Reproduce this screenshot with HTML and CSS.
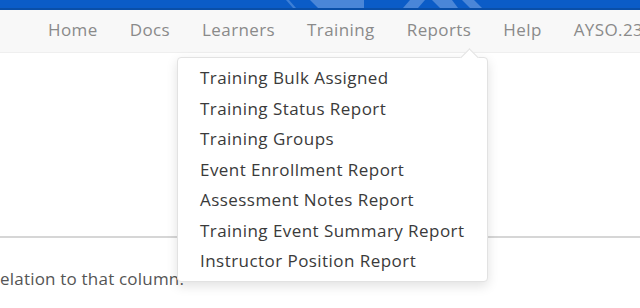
FILE: index.html
```html
<!DOCTYPE html>
<html>
<head>
<meta charset="utf-8">
<link rel="stylesheet" href="styles.css">
</head>
<body>
<div class="banner">
  <svg class="banner-art" width="640" height="8" viewBox="0 0 640 8">
    <polygon points="286,0 289,0 296,8 293,8" fill="#3d7fd6"/>
    <polygon points="310,0 364,0 364,8 318,8" fill="#4a86d8"/>
    <polygon points="410,0 425,0 418,8 403,8" fill="#4a86d8"/>
    <polygon points="432,0 452,0 458,8 440,8" fill="#4a86d8"/>
    <polygon points="462,0 474,0 482,8 470,8" fill="#4a86d8"/>
  </svg>
</div>
<nav class="nav">
  <a class="nav-item">Home</a>
  <a class="nav-item">Docs</a>
  <a class="nav-item">Learners</a>
  <a class="nav-item">Training</a>
  <a class="nav-item">Reports</a>
  <a class="nav-item">Help</a>
  <a class="nav-item">AYSO.23</a>
</nav>
<main class="content">
  <div class="spacer"></div>
  <div class="rule"></div>
  <p class="note">elation to that column.</p>
</main>
<div class="dropdown">
  <span class="caret"></span>
  <ul class="menu">
    <li>Training Bulk Assigned</li>
    <li>Training Status Report</li>
    <li>Training Groups</li>
    <li>Event Enrollment Report</li>
    <li>Assessment Notes Report</li>
    <li>Training Event Summary Report</li>
    <li>Instructor Position Report</li>
  </ul>
</div>
</body>
</html>
```
FILE: styles.css
```css
html, body {
  margin: 0;
  padding: 0;
  background: #ffffff;
  font-family: "Open Sans", "Liberation Sans", sans-serif;
  width: 640px;
  height: 308px;
  overflow: hidden;
}
.banner {
  height: 8px;
  background: #0b5cc7;
  border-bottom: 2px solid #0a4fa8;
  overflow: hidden;
}
.banner-art {
  display: block;
}
.nav {
  height: 39px;
  padding-bottom: 3px;
  background: #f8f8f8;
  border-bottom: 1px solid #efefef;
  display: flex;
  align-items: center;
  gap: 32px;
  padding-left: 48px;
  white-space: nowrap;
  overflow: hidden;
}
.nav-item {
  font-size: 17px;
  letter-spacing: 0.4px;
  color: #8a8a8a;
  text-decoration: none;
}
.content {
  display: block;
}
.spacer {
  height: 183px;
}
.rule {
  height: 2px;
  background: #d6d6d6;
}
.note {
  margin: 29px 0 0 0;
  font-size: 17px;
  letter-spacing: 0.2px;
  color: #555555;
}
.dropdown {
  position: absolute;
  left: 177px;
  top: 57px;
  width: 311px;
  height: 225px;
  background: #ffffff;
  border: 1px solid #e2e2e2;
  border-radius: 4px;
  box-shadow: 0 4px 12px rgba(0,0,0,0.12);
  box-sizing: border-box;
}
.caret {
  position: absolute;
  top: -7px;
  left: 285px;
  width: 12px;
  height: 12px;
  background: #ffffff;
  border-left: 1px solid #e2e2e2;
  border-top: 1px solid #e2e2e2;
  transform: rotate(45deg);
}
.menu {
  list-style: none;
  margin: 0;
  padding: 5px 0 0 22px;
  position: relative;
}
.menu li {
  font-size: 17px;
  letter-spacing: 0.45px;
  line-height: 30.5px;
  color: #3a3a3a;
}
```
